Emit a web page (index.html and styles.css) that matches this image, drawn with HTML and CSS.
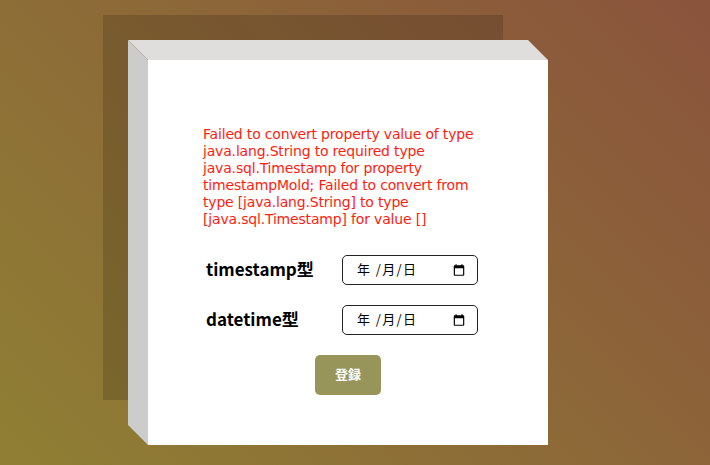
FILE: index.html
```html
<!DOCTYPE html>
<html lang="ja">
<head>
  <meta charset="UTF-8">
  <meta name="viewport" content="width=device-width, initial-scale=1.0">
  <title>登録</title>
  <link rel="stylesheet" href="styles.css">
</head>
<body>
  <form class="card">
    <p class="error-text">Failed to convert property value of type java.lang.String to required type java.sql.Timestamp for property timestampMold; Failed to convert from type [java.lang.String] to type [java.sql.Timestamp] for value []</p>

    <div class="form-row">
      <label class="form-label">timestamp型</label>
      <div class="date-field">
        <span class="date-text">年 /月/日</span>
        <svg class="date-icon" viewBox="0 0 24 24"><path d="M19 4h-1V2h-2v2H8V2H6v2H5c-1.1 0-2 .9-2 2v14c0 1.100.9 2 2 2h14c1.100 0 2-.9 2-2V6c0-1.100-.9-2-2-2zm0 16H5V9h14v11z"/></svg>
      </div>
    </div>

    <div class="form-row">
      <label class="form-label">datetime型</label>
      <div class="date-field">
        <span class="date-text">年 /月/日</span>
        <svg class="date-icon" viewBox="0 0 24 24"><path d="M19 4h-1V2h-2v2H8V2H6v2H5c-1.1 0-2 .9-2 2v14c0 1.100.9 2 2 2h14c1.100 0 2-.9 2-2V6c0-1.100-.9-2-2-2zm0 16H5V9h14v11z"/></svg>
      </div>
    </div>

    <button class="submit-button" type="button">登録</button>
  </form>
</body>
</html>
```

FILE: styles.css
```css
html, body {
  height: 100%;
}

body {
  margin: 0;
  overflow: hidden;
  font-family: "Noto Sans CJK JP", "Noto Sans", sans-serif;
  background: linear-gradient(45deg, #8f7f33, #8a533c);
}

.card {
  position: relative;
  box-sizing: border-box;
  width: 400px;
  height: 385px;
  margin: 60px 0 0 148px;
  padding: 66px 55px 0;
  background-color: #fff;
  box-shadow: -45px -45px 0 rgba(0, 0, 0, 0.15);
}

/* top face of the box */
.card::before {
  content: "";
  position: absolute;
  top: -20px;
  left: -20px;
  width: 420px;
  height: 20px;
  background-color: #dfdedd;
  clip-path: polygon(0 0, 400px 0, 100% 100%, 20px 100%);
}

/* left face of the box */
.card::after {
  content: "";
  position: absolute;
  top: -20px;
  left: -20px;
  width: 20px;
  height: 405px;
  background-color: #cccccc;
  clip-path: polygon(0 0, 100% 20px, 100% 100%, 0 385px);
}

.error-text {
  margin: 0 0 27px;
  font-family: "DejaVu Sans", sans-serif;
  font-size: 14px;
  letter-spacing: -0.18px;
  line-height: 17px;
  color: #ff1c10;
}

.form-row {
  display: flex;
  align-items: center;
  justify-content: space-between;
  width: 272px;
  margin: 0 0 20px 3px;
}

.form-label {
  padding-bottom: 4px;
  font-size: 17px;
  font-weight: bold;
  color: #000;
}

.date-field {
  display: flex;
  align-items: center;
  justify-content: space-between;
  box-sizing: border-box;
  width: 136px;
  height: 30px;
  padding: 0 11px 0 14px;
  border: 1px solid #222;
  border-radius: 5px;
  font-size: 13px;
  color: #000;
}

.date-text {
  padding-bottom: 3px;
  letter-spacing: 1.4px;
}

.date-icon {
  width: 14px;
  height: 14px;
  fill: #000;
}

.submit-button {
  display: block;
  width: 66px;
  height: 40px;
  margin: 0 auto;
  padding: 0 0 3px;
  border: none;
  border-radius: 5px;
  background-color: #98955a;
  color: #fff;
  font-family: inherit;
  font-size: 13px;
  font-weight: bold;
}
```
